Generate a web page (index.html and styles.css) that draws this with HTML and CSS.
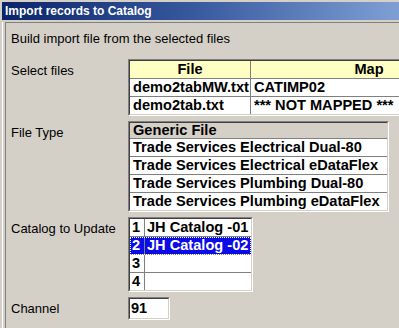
FILE: index.html
```html
<!DOCTYPE html>
<html>
<head>
<meta charset="utf-8">
<link rel="stylesheet" href="styles.css">
</head>
<body>
<div class="window">
  <div class="titlebar"><span class="title">Import records to Catalog</span></div>
  <div class="frame">
    <div class="panel">
      <div class="intro">Build import file from the selected files</div>
      <div class="form">
        <div class="label">Select files</div>
        <div class="sunken files">
          <div class="sunken-in">
            <table class="grid">
              <tr class="hdr"><th class="c-file">File</th><th class="c-map">Map</th></tr>
              <tr><td>demo2tabMW.txt</td><td>CATIMP02</td></tr>
              <tr class="last"><td>demo2tab.txt</td><td>*** NOT MAPPED ***</td></tr>
            </table>
          </div>
        </div>

        <div class="label">File Type</div>
        <div class="sunken types">
          <div class="sunken-in">
            <table class="grid">
              <tr class="hdr2"><th>Generic File</th></tr>
              <tr><td>Trade Services Electrical Dual-80</td></tr>
              <tr><td>Trade Services Electrical eDataFlex</td></tr>
              <tr><td>Trade Services Plumbing Dual-80</td></tr>
              <tr class="last"><td>Trade Services Plumbing eDataFlex</td></tr>
            </table>
          </div>
        </div>

        <div class="label">Catalog to Update</div>
        <div class="sunken catalogs">
          <div class="sunken-in">
            <table class="grid cat">
              <tr><td class="num">1</td><td>JH Catalog -01</td></tr>
              <tr class="sel"><td class="num">2</td><td>JH Catalog -02</td></tr>
              <tr><td class="num">3</td><td></td></tr>
              <tr class="last"><td class="num">4</td><td></td></tr>
            </table>
          </div>
        </div>

        <div class="label">Channel</div>
        <div class="sunken channel">
          <div class="sunken-in"><span class="value">91</span></div>
        </div>
      </div>
    </div>
  </div>
</div>
</body>
</html>
```

FILE: styles.css
```css
* {
  box-sizing: border-box;
}

html, body {
  margin: 0;
  padding: 0;
  width: 399px;
  height: 328px;
  overflow: hidden;
  background: #d4d0c8;
}

body {
  font-family: "Liberation Sans", Arial, sans-serif;
  font-size: 13px;
  color: #000;
}

.window {
  width: 399px;
  height: 328px;
  overflow: hidden;
  padding: 2px 0 0 2px;
}

.titlebar {
  height: 18px;
  background: linear-gradient(to right, #0a246a 0%, #3a5ba0 50%, #7f9fd4 100%);
  display: flex;
  align-items: center;
  padding-left: 3px;
}

.title {
  color: #fff;
  font-weight: bold;
  font-size: 12px;
  line-height: 18px;
  white-space: nowrap;
}

.frame {
  margin-top: 2px;
  border-left: 1px solid #fff;
  padding-left: 2px;
  height: 306px;
}

.panel {
  height: 100%;
  border-top: 1px solid #808080;
  border-left: 1px solid #808080;
  padding: 8px 0 0 5px;
  overflow: hidden;
}

.intro {
  line-height: 15px;
  white-space: nowrap;
}

.form {
  margin-top: 13px;
  display: grid;
  grid-template-columns: 117px auto;
  row-gap: 5px;
  align-items: start;
  justify-items: start;
}

.label {
  padding-top: 4px;
  line-height: 15px;
  white-space: nowrap;
}

.sunken {
  border-top: 1px solid #808080;
  border-left: 1px solid #808080;
  border-bottom: 1px solid #ffffff;
  border-right: 1px solid #ffffff;
}

.sunken-in {
  border-top: 1px solid #404040;
  border-left: 1px solid #404040;
  border-bottom: 1px solid #d4d0c8;
  border-right: 1px solid #d4d0c8;
  background: #fff;
}

.grid {
  border-collapse: separate;
  border-spacing: 0;
  width: 100%;
  font-size: 14.6px;
  font-weight: bold;
  table-layout: fixed;
}

.grid td,
.grid th {
  height: 18px;
  line-height: 17px;
  padding: 0 3px;
  border-bottom: 1px solid #808080;
  border-right: 1px solid #808080;
  white-space: nowrap;
  overflow: hidden;
  text-align: left;
  font-weight: bold;
}

.grid td:last-child,
.grid th:last-child {
  border-right: none;
}

.grid tr.last td {
  border-bottom: none;
  height: 17px;
}

.files {
  width: 361px;
}

.grid .c-file {
  width: 121px;
}

.grid tr.hdr th {
  background: #ffffc4;
  text-align: center;
  height: 18px;
}

.types {
  width: 261px;
}

.grid tr.hdr2 th {
  background: #d4d0c8;
  height: 16px;
  line-height: 15px;
}

.catalogs {
  width: 125px;
}

.cat td {
  padding: 0 2px;
}

.cat td.num {
  width: 15px;
  padding: 0 1px 0 2px;
}

.cat tr.sel td {
  background: #0c0ce6;
  color: #fff;
}

.cat tr.sel {
  outline: 1px dotted #ffffff;
  outline-offset: -1px;
}

.channel {
  width: 42px;
  height: 23px;
}

.channel .sunken-in {
  height: 100%;
  padding-left: 1px;
  display: flex;
  align-items: center;
}

.value {
  font-size: 14.6px;
  font-weight: bold;
  line-height: 17px;
}
```
